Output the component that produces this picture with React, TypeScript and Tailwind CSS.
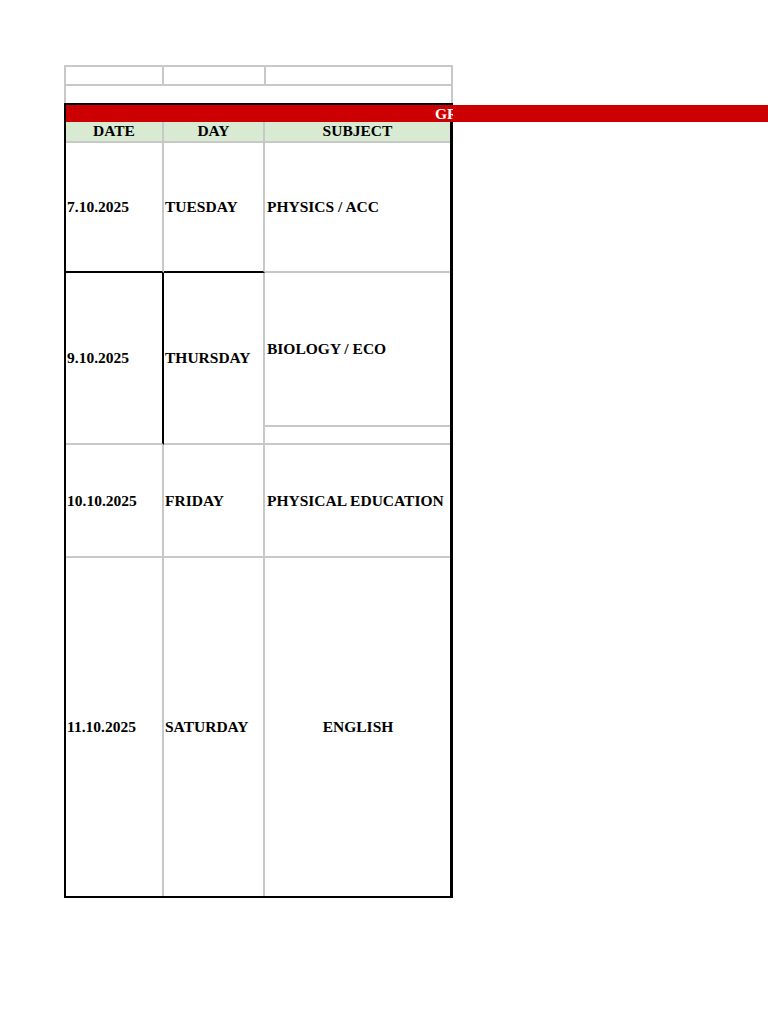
const rows = [
  { date: "7.10.2025", day: "TUESDAY", subject: "PHYSICS / ACC" },
  { date: "10.10.2025", day: "FRIDAY", subject: "PHYSICAL EDUCATION" },
];

function Cell({ className, children }: { className: string; children?: React.ReactNode }) {
  return <div className={`flex items-center pl-[1px] ${className}`}>{children}</div>;
}

export default function App() {
  return (
    <div
      className="min-h-[1024px] w-full bg-white pt-[65px] pl-[64px] text-[15.5px] font-bold text-black"
      style={{ fontFamily: '"Liberation Serif", "Times New Roman", serif' }}
    >
      {/* top empty rows */}
      <div className="flex h-[21px] w-[389px] border-x-2 border-t-2 border-b-2 border-[#c8c8c8]">
        <div className="w-[98px] border-r-2 border-[#c8c8c8]" />
        <div className="w-[102px] border-r-2 border-[#c8c8c8]" />
        <div className="flex-1" />
      </div>
      <div className="h-[17px] w-[389px] border-x-2 border-[#c8c8c8]" />

      {/* red title band */}
      <div className="flex w-full">
        <div className="h-[19px] w-[389px] shrink-0 overflow-hidden whitespace-nowrap border-l-2 border-t-2 border-black bg-[#cc0000] text-white leading-[17px]">
          <span className="ml-[369px]">GRADE XI</span>
        </div>
        <div className="mt-[2px] h-[17px] flex-1 bg-[#cc0000]" />
      </div>

      {/* table */}
      <div className="w-[389px] border-l-2 border-r-[3px] border-b-2 border-black">
        <div className="flex h-[21px] border-b-2 border-[#c8c8c8] bg-[#d9ead3] leading-[18px]">
          <div className="w-[98px] border-r-2 border-[#c8c8c8] text-center">DATE</div>
          <div className="w-[101px] border-r-2 border-[#c8c8c8] text-center">DAY</div>
          <div className="flex-1 text-center">SUBJECT</div>
        </div>

        <div className="flex h-[130px]">
          <Cell className="w-[98px] border-r-2 border-b-2 border-r-[#c8c8c8] border-b-black">{rows[0].date}</Cell>
          <Cell className="w-[101px] border-r-2 border-b-2 border-r-[#c8c8c8] border-b-black">{rows[0].day}</Cell>
          <Cell className="flex-1 border-b-2 border-[#c8c8c8] pl-[2px]">{rows[0].subject}</Cell>
        </div>

        <div className="flex h-[172px]">
          <Cell className="w-[98px] border-r-2 border-b-2 border-r-black border-b-[#c8c8c8]">9.10.2025</Cell>
          <Cell className="w-[101px] border-r-2 border-b-2 border-[#c8c8c8]">THURSDAY</Cell>
          <div className="flex flex-1 flex-col">
            <Cell className="h-[154px] border-b-2 border-[#c8c8c8] pl-[2px]">BIOLOGY / ECO</Cell>
            <div className="h-[18px] border-b-2 border-[#c8c8c8]" />
          </div>
        </div>

        <div className="flex h-[113px] border-b-2 border-[#c8c8c8]">
          <Cell className="w-[98px] border-r-2 border-[#c8c8c8]">{rows[1].date}</Cell>
          <Cell className="w-[101px] border-r-2 border-[#c8c8c8]">{rows[1].day}</Cell>
          <Cell className="flex-1 pl-[2px]">{rows[1].subject}</Cell>
        </div>

        <div className="flex h-[338px]">
          <Cell className="w-[98px] border-r-2 border-[#c8c8c8]">11.10.2025</Cell>
          <Cell className="w-[101px] border-r-2 border-[#c8c8c8]">SATURDAY</Cell>
          <Cell className="flex-1 justify-center">ENGLISH</Cell>
        </div>
      </div>
    </div>
  );
}
